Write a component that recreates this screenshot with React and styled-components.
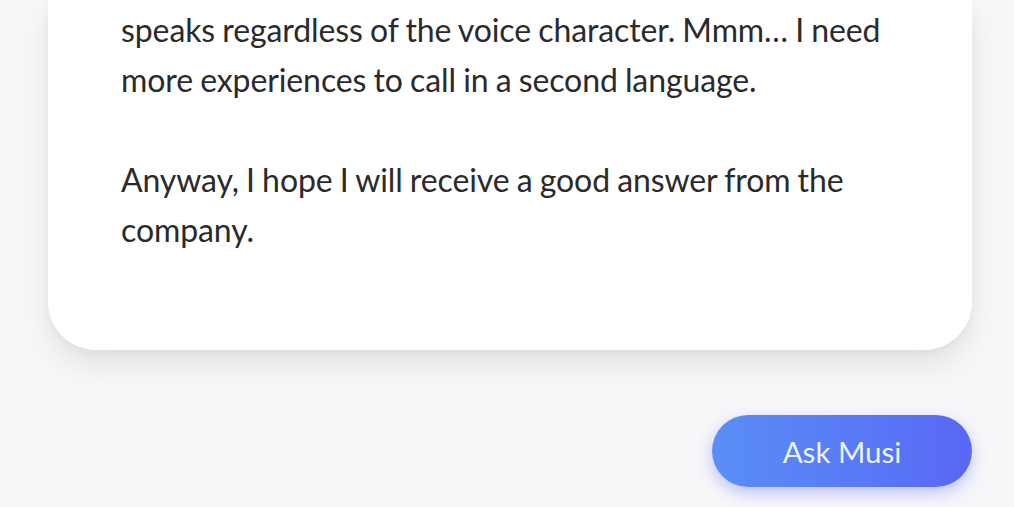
import React from "react";
import styled, { createGlobalStyle } from "styled-components";

const GlobalStyle = createGlobalStyle`
  html, body {
    margin: 0;
    padding: 0;
    background: #f7f7f9;
  }
  body {
    font-family: Lato, "Open Sans", sans-serif;
    overflow: hidden;
  }
`;

const Page = styled.div`
  width: 1014px;
  height: 507px;
  display: flex;
  flex-direction: column;
  background: #f7f7f9;
`;

const Card = styled.div`
  margin: 0 42px 0 48px;
  padding: 5px 73px 95px;
  background: #ffffff;
  border-radius: 0 0 48px 48px;
  box-shadow: 0 16px 30px rgba(0, 0, 0, 0.08), 0 4px 10px rgba(0, 0, 0, 0.04);
  display: flex;
  flex-direction: column;
  gap: 50px;
`;

const Paragraph = styled.p`
  margin: 0;
  font-size: 32px;
  line-height: 50px;
  color: #2a2a2c;
  letter-spacing: -0.1px;
  word-spacing: -0.9px;
`;

const Footer = styled.div`
  display: flex;
  justify-content: flex-end;
  padding: 65px 42px 0 0;
`;

const AskButton = styled.button`
  width: 260px;
  height: 72px;
  border: none;
  border-radius: 36px;
  background: linear-gradient(90deg, #5a8ef6 0%, #5878f5 60%, #5a67f4 100%);
  box-shadow: 0 6px 16px rgba(90, 110, 245, 0.38);
  color: #eaf5ff;
  font-family: Lato, "Open Sans", sans-serif;
  font-size: 29.5px;
  cursor: pointer;
`;

export default function App() {
  return (
    <Page>
      <GlobalStyle />
      <Card>
        <Paragraph>
          speaks regardless of the voice character. Mmm… I need
          <br />
          more experiences to call in a second language.
        </Paragraph>
        <Paragraph>
          Anyway, I hope I will receive a good answer from the company.
        </Paragraph>
      </Card>
      <Footer>
        <AskButton>Ask Musi</AskButton>
      </Footer>
    </Page>
  );
}
